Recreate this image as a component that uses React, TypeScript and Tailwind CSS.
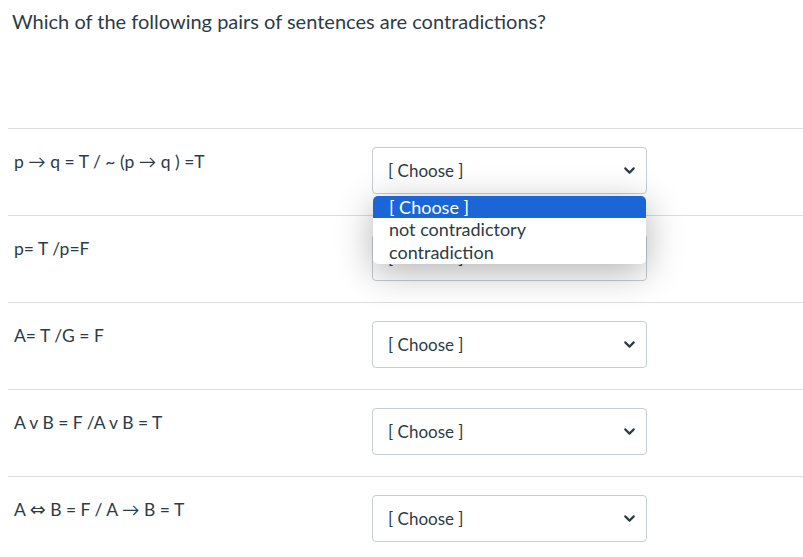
import { ChevronDown } from 'lucide-react'

const rows = [
	<>p → q = T / ~ (p → q ) =T</>,
	<>p= T /p=F</>,
	<>A= T /G = F</>,
	<>A v B = F /A v B = T</>,
	<>
		A{' '}
		<span className="text-[19px] leading-[20px]" style={{ fontFamily: '"DejaVu Sans", sans-serif' }}>
			⇔
		</span>{' '}
		B = F / A → B = T
	</>,
]

const options = ['[ Choose ]', 'not contradictory', 'contradiction']

function Select() {
	return (
		<div className="mt-[18px] w-[275px] h-[47px] flex items-center justify-between border border-[#c7cdd1] rounded-[4px] bg-white pl-[15px] pr-[8px]">
			<span className="text-[17px]">[ Choose ]</span>
			<ChevronDown size={17} strokeWidth={3} className="text-[#2d3b45]" />
		</div>
	)
}

export default function App() {
	return (
		<div
			className="bg-white w-full h-[557px] overflow-hidden text-[#2d3b45]"
			style={{ fontFamily: 'Lato, "Open Sans", sans-serif' }}
		>
			<h1 className="pl-[12px] pt-[6px] text-[20px] leading-[30px]">
				Which of the following pairs of sentences are contradictions?
			</h1>

			<div className="ml-[8px] mt-[92px]">
				{rows.map((text, i) => (
					<div key={i} className="relative h-[87px] flex border-t border-[#dcdcdc]">
						<div className="w-[364px] pl-[6px] pt-[20px] text-[17.5px] leading-[25px]">
							{text}
						</div>
						<Select />

						{i === 0 && (
							<div className="absolute z-10 left-[365px] top-[67px] w-[273px] bg-white rounded-[5px] overflow-hidden shadow-[0_8px_36px_rgba(0,0,0,0.3)] text-[18px] leading-[23px]">
								{options.map((o, j) => (
									<div
										key={o}
										className={
											j === 0
												? 'bg-[#1b66d6] text-white pl-[16px] h-[22px]'
												: 'pl-[16px] h-[23px]'
										}
									>
										{o}
									</div>
								))}
							</div>
						)}
					</div>
				))}
			</div>
		</div>
	)
}
